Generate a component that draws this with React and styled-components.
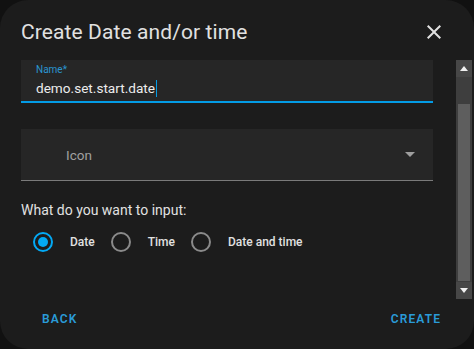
import React from 'react'
import styled, { createGlobalStyle } from 'styled-components'

const GlobalStyle = createGlobalStyle`
    html, body {
        margin: 0;
        padding: 0;
        background: #111111;
    }
    body {
        font-family: Roboto, "Noto Sans", sans-serif;
    }
`

const options = ['Date', 'Time', 'Date and time']

const App = () => {
    return (
        <>
            <GlobalStyle />
            <Dialog>
                <Header>
                    <Title>Create Date and/or time</Title>
                    <CloseButton aria-label="close">
                        <svg width="24" height="24" viewBox="0 0 24 24">
                            <path d="M19 6.41 17.59 5 12 10.59 6.41 5 5 6.41 10.59 12 5 17.59 6.41 19 12 13.41 17.59 19 19 17.59 13.41 12z" fill="#e1e1e1" />
                        </svg>
                    </CloseButton>
                </Header>
                <Body>
                    <Content>
                        <NameField>
                            <FieldLabel>Name*</FieldLabel>
                            <FieldValue>demo.set.start.date<Caret /></FieldValue>
                        </NameField>
                        <SelectField>
                            <SelectText>Icon</SelectText>
                            <svg width="10" height="5" viewBox="0 0 10 5">
                                <path d="M0 0 L10 0 L5 5 Z" fill="#9e9e9e" />
                            </svg>
                        </SelectField>
                        <Question>What do you want to input:</Question>
                        <RadioRow>
                            {options.map((opt, i) => (
                                <RadioItem key={opt}>
                                    <Radio checked={i === 0} />
                                    <RadioLabel>{opt}</RadioLabel>
                                </RadioItem>
                            ))}
                        </RadioRow>
                    </Content>
                    <Scrollbar>
                        <ScrollArrow>
                            <svg width="8" height="5" viewBox="0 0 8 5"><path d="M0 5 L8 5 L4 0 Z" fill="#f0f0f0" /></svg>
                        </ScrollArrow>
                        <Track>
                            <Thumb />
                        </Track>
                        <ScrollArrow>
                            <svg width="8" height="5" viewBox="0 0 8 5"><path d="M0 0 L8 0 L4 5 Z" fill="#f0f0f0" /></svg>
                        </ScrollArrow>
                    </Scrollbar>
                </Body>
                <Actions>
                    <TextButton>Back</TextButton>
                    <TextButton>Create</TextButton>
                </Actions>
            </Dialog>
        </>
    )
}

export default App

const Dialog = styled.div`
    width: 474px;
    height: 349px;
    background-color: #1c1c1c;
    border-radius: 28px;
    overflow: hidden;
    display: flex;
    flex-direction: column;
    color: #e1e1e1;
`

const Header = styled.div`
    height: 60px;
    display: flex;
    align-items: center;
    justify-content: space-between;
    padding: 0 28px 0 21px;
    box-sizing: border-box;
    flex-shrink: 0;
`

const Title = styled.h2`
    margin: 0;
    padding-top: 4px;
    font-size: 21px;
    font-weight: 400;
    color: #e1e1e1;
    letter-spacing: 0.1px;
`

const CloseButton = styled.button`
    all: unset;
    display: grid;
    place-items: center;
    margin-top: 4px;
`

const Body = styled.div`
    height: 239px;
    display: flex;
    flex-shrink: 0;
    padding-right: 2px;
`

const Content = styled.div`
    flex: 1;
    padding: 0 23px 0 21px;
    overflow: hidden;
`

const NameField = styled.div`
    height: 43px;
    box-sizing: border-box;
    background-color: #262626;
    border-bottom: 2px solid #039be5;
    padding: 4px 15px 0;
    display: flex;
    flex-direction: column;
`

const FieldLabel = styled.span`
    font-size: 10px;
    line-height: 12px;
    color: #2a95d0;
`

const FieldValue = styled.span`
    font-size: 13.6px;
    line-height: 20px;
    margin-top: 2px;
    color: #ececec;
    display: flex;
    align-items: center;
`

const Caret = styled.span`
    width: 1px;
    height: 17px;
    margin-left: 1px;
    background-color: #039be5;
`

const SelectField = styled.div`
    margin-top: 26px;
    height: 52px;
    box-sizing: border-box;
    background-color: #262626;
    border-bottom: 1px solid #7a7a7a;
    display: flex;
    align-items: center;
    justify-content: space-between;
    padding: 0 18px 0 45px;
`

const SelectText = styled.span`
    font-size: 13.5px;
    color: #a0a0a0;
`

const Question = styled.div`
    margin-top: 21px;
    font-size: 14px;
    color: #e1e1e1;
`

const RadioRow = styled.div`
    display: flex;
    align-items: center;
    margin-top: 14px;
    padding-left: 12px;
`

const RadioItem = styled.label`
    display: flex;
    align-items: center;
    margin-right: 16px;
`

const Radio = styled.span`
    width: 20px;
    height: 20px;
    box-sizing: border-box;
    border-radius: 50%;
    border: 2px solid ${({ checked }) => (checked ? '#03a9f4' : '#8a8a8a')};
    display: grid;
    place-items: center;
    &::after {
        content: '';
        width: 10px;
        height: 10px;
        border-radius: 50%;
        background-color: ${({ checked }) => (checked ? '#03a9f4' : 'transparent')};
    }
`

const RadioLabel = styled.span`
    margin-left: 17px;
    font-size: 12px;
    font-weight: 500;
    color: #e1e1e1;
`

const Scrollbar = styled.div`
    width: 16px;
    display: flex;
    flex-direction: column;
    background-color: #3e3e3e;
`

const ScrollArrow = styled.div`
    height: 17px;
    display: grid;
    place-items: center;
    background-color: #474747;
`

const Track = styled.div`
    flex: 1;
    padding: 27px 2px 1px;
    display: flex;
`

const Thumb = styled.div`
    flex: 1;
    background-color: #5e5e5e;
`

const Actions = styled.div`
    flex: 1;
    display: flex;
    align-items: center;
    justify-content: space-between;
    padding: 0 21px 0 30px;
    padding-bottom: 10px;
`

const TextButton = styled.button`
    all: unset;
    padding: 6px 12px;
    font-family: Roboto, sans-serif;
    font-size: 12px;
    font-weight: 600;
    letter-spacing: 1.1px;
    text-transform: uppercase;
    color: #2a9bd8;
`
